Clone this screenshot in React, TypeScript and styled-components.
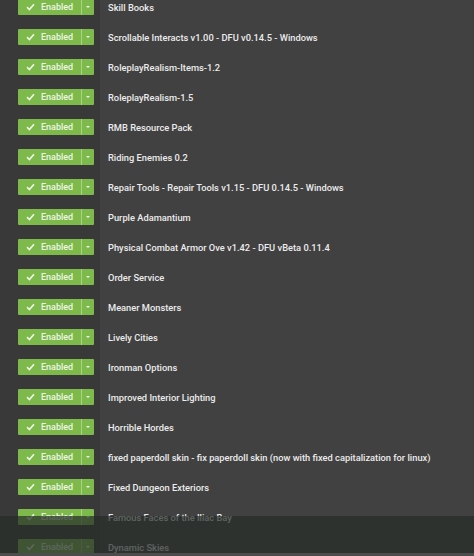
import styled, { createGlobalStyle } from "styled-components";

const mods = [
  "Skill Books",
  "Scrollable Interacts v1.00 - DFU v0.14.5 - Windows",
  "RoleplayRealism-Items-1.2",
  "RoleplayRealism-1.5",
  "RMB Resource Pack",
  "Riding Enemies 0.2",
  "Repair Tools - Repair Tools v1.15 - DFU 0.14.5 - Windows",
  "Purple Adamantium",
  "Physical Combat Armor Ove v1.42 - DFU vBeta 0.11.4",
  "Order Service",
  "Meaner Monsters",
  "Lively Cities",
  "Ironman Options",
  "Improved Interior Lighting",
  "Horrible Hordes",
  "fixed paperdoll skin - fix paperdoll skin (now with fixed capitalization for linux)",
  "Fixed Dungeon Exteriors",
  "Famous Faces of the Iliac Bay",
  "Dynamic Skies",
];

const GlobalStyle = createGlobalStyle`
  html, body {
    margin: 0;
    padding: 0;
    background: #414141;
    overflow: hidden;
  }
  body {
    font-family: Roboto, "Liberation Sans", sans-serif;
  }
`;

const Screen = styled.div`
  position: relative;
  width: 474px;
  height: 556px;
  overflow: hidden;
  background: #414141;
`;

const List = styled.div`
  display: flex;
  flex-direction: column;
  margin-top: -8px;
`;

const Row = styled.div`
  display: grid;
  grid-template-columns: 100px 1fr;
  height: 30px;
`;

const ToggleCell = styled.div`
  display: flex;
  align-items: center;
  padding-left: 18px;
  background: #393939;
`;

const SplitButton = styled.div`
  display: flex;
  height: 16px;
  width: 76px;
  background: #7db94b;
  border-radius: 1px;
`;

const MainPart = styled.div`
  flex: 1;
  display: flex;
  align-items: center;
  gap: 6px;
  padding-left: 8px;
  color: #eef6e6;
  font-size: 9px;
  font-weight: 500;
  border-right: 1px solid #a8d47e;
`;

const Caret = styled.div`
  width: 12px;
  display: flex;
  align-items: center;
  justify-content: center;
  &::after {
    content: "";
    border-left: 2px solid transparent;
    border-right: 2px solid transparent;
    border-top: 2px solid #eef6e6;
  }
`;

const Name = styled.div`
  display: flex;
  align-items: center;
  padding-left: 8px;
  color: #ececec;
  font-size: 9.3px;
  font-weight: 500;
  white-space: nowrap;
`;

const Shade = styled.div`
  position: absolute;
  left: 0;
  right: 0;
  top: 516px;
  height: 37px;
  background: rgba(38, 44, 40, 0.72);
`;

const BottomEdge = styled.div`
  position: absolute;
  left: 0;
  right: 0;
  bottom: 0;
  height: 3px;
  background: #4c4c4c;
`;

const Check = () => (
  <svg width="9" height="8" viewBox="0 0 9 8">
    <path d="M1 4.2 L3.4 6.5 L8 1.3" fill="none" stroke="#eef6e6" strokeWidth="1.6" />
  </svg>
);

export default function App() {
  return (
    <Screen>
      <GlobalStyle />
      <List>
        {mods.map((m) => (
          <Row key={m}>
            <ToggleCell>
              <SplitButton>
                <MainPart>
                  <Check />
                  Enabled
                </MainPart>
                <Caret />
              </SplitButton>
            </ToggleCell>
            <Name>{m}</Name>
          </Row>
        ))}
      </List>
      <Shade />
      <BottomEdge />
    </Screen>
  );
}
